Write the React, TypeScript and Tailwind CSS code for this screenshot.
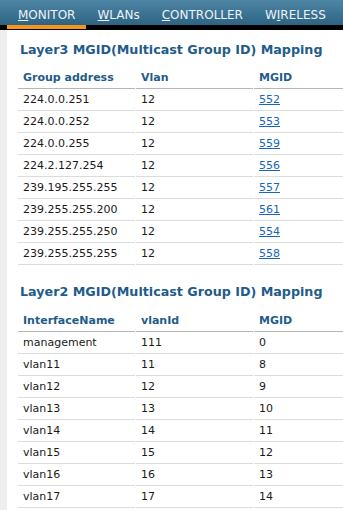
const navItems = [
  { key: 'M', rest: 'ONITOR', pre: '', active: true },
  { key: 'W', rest: 'LANs', pre: '', active: false },
  { key: 'C', rest: 'ONTROLLER', pre: '', active: false },
  { key: 'I', rest: 'RELESS', pre: 'W', active: false },
]

const layer3 = [
  ['224.0.0.251', '12', '552'],
  ['224.0.0.252', '12', '553'],
  ['224.0.0.255', '12', '559'],
  ['224.2.127.254', '12', '556'],
  ['239.195.255.255', '12', '557'],
  ['239.255.255.200', '12', '561'],
  ['239.255.255.250', '12', '554'],
  ['239.255.255.255', '12', '558'],
]

const layer2 = [
  ['management', '111', '0'],
  ['vlan11', '11', '8'],
  ['vlan12', '12', '9'],
  ['vlan13', '13', '10'],
  ['vlan14', '14', '11'],
  ['vlan15', '15', '12'],
  ['vlan16', '16', '13'],
  ['vlan17', '17', '14'],
]

function MappingTable({ heads, rows, links }: { heads: string[]; rows: string[][]; links?: boolean }) {
  return (
    <div className="grid grid-cols-[117px_117px_1fr] gap-x-px">
      {heads.map((h) => (
        <div key={h} className="h-[22px] flex items-center pl-[5px] border-b border-[#b5b5b5] font-bold text-[#1f5c8a]">
          {h}
        </div>
      ))}
      {rows.map((r, i) =>
        r.map((c, j) => (
          <div key={i + '-' + j} className="h-[22px] flex items-center pl-[5px] border-b border-[#dcdcdc] text-[#1a1a1a]">
            {links && j === 2 ? (
              <a href="#" className="text-[#1565c0] underline">{c}</a>
            ) : (
              c
            )}
          </div>
        ))
      )}
    </div>
  )
}

export default function App() {
  return (
    <div className="w-[343px] h-[510px] overflow-hidden bg-white font-['DejaVu_Sans',Verdana,sans-serif] text-[11px] leading-[13px]">
      {/* top menu: blue gradient, black rule under it */}
      <div className="flex pl-[7px] bg-[linear-gradient(to_bottom,#4e84a4_0px,#2d6383_25px,#000_25px)]">
        {navItems.map((n) => (
          <div key={n.key + n.rest} className="flex flex-col">
            <div className="h-[25px] pt-[8px] px-[11px] text-[12px] leading-[14px] text-[#eef3f6] whitespace-nowrap">
              {n.pre}
              <span className="underline">{n.key}</span>
              {n.rest}
            </div>
            <div className={n.active ? 'h-[4px] bg-[#f7941d]' : 'h-[4px]'} />
            <div className="h-px" />
          </div>
        ))}
      </div>
      <div className="flex h-full">
        <div className="w-[7px] bg-[#eeeeee]" />
        <div className="flex-1 pl-[11px] pt-[12px]">
          <h2 className="ml-[2px] mb-[9px] text-[12.7px] leading-[16px] font-bold text-[#1f5c8a]">
            Layer3 MGID(Multicast Group ID) Mapping
          </h2>
          <MappingTable heads={['Group address', 'Vlan', 'MGID']} rows={layer3} links />
          <h2 className="ml-[2px] mt-[19px] mb-[10px] text-[12.7px] leading-[16px] font-bold text-[#1f5c8a]">
            Layer2 MGID(Multicast Group ID) Mapping
          </h2>
          <MappingTable heads={['InterfaceName', 'vlanId', 'MGID']} rows={layer2} />
        </div>
      </div>
    </div>
  )
}
